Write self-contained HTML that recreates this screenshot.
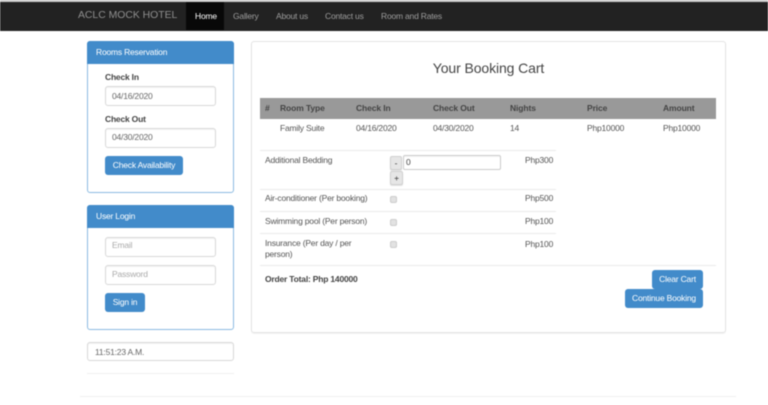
<!DOCTYPE html>
<html><head><meta charset="utf-8"><style>
html,body{margin:0;padding:0;background:#fff}
#r{position:relative;width:768px;height:405px;overflow:hidden;background:#fff;font-family:"Liberation Sans",sans-serif;font-size:8.5px;letter-spacing:-.2px;color:#555;filter:blur(.45px)}
#r div{position:absolute;box-sizing:border-box;white-space:nowrap}
.t{line-height:12px}
.b{font-weight:bold;color:#444;font-size:8.5px;letter-spacing:-.2px}
.h{font-weight:bold;color:#444;font-size:8.5px;letter-spacing:-.1px}
.in{background:#fff;border:1px solid #d8d8d8;border-radius:3px;padding-left:6px;line-height:18px;color:#666;box-shadow:inset 0 1px 1px rgba(0,0,0,.05)}
.ph{color:#aaa}
.btn{background:#428bca;border-radius:3px;color:#fff;text-align:center;line-height:18px}
.l{height:1px;background:#ebebeb}
.cb{width:7px;height:7px;background:#e2e2e2;border:1px solid #ccc;border-radius:2px;left:390px}
.sb{background:#e6e6e6;border:1px solid #d0d0d0;border-radius:2px;text-align:center;color:#333;box-shadow:0 1px 1px rgba(0,0,0,.12)}
</style></head><body><div id="r">
<div style="left:0;top:0;width:768px;height:31px;background:#222;border-top:2px solid #ccc"></div>
<div style="left:186px;top:2px;width:38px;height:28px;background:#080808"></div>
<div class="t" style="left:78px;top:10px;font-size:10.4px;letter-spacing:0;color:#8f8f8f">ACLC MOCK HOTEL</div>
<div class="t" style="left:195px;top:10px;color:#fff">Home</div>
<div class="t" style="left:233px;top:10px;color:#9d9d9d">Gallery</div>
<div class="t" style="left:276px;top:10px;color:#9d9d9d">About us</div>
<div class="t" style="left:325px;top:10px;color:#9d9d9d">Contact us</div>
<div class="t" style="left:381px;top:10px;color:#9d9d9d">Room and Rates</div>

<div style="left:87px;top:41px;width:147px;height:152px;border:1px solid #8dbbe2;border-radius:3px"></div>
<div style="left:87px;top:41px;width:147px;height:23px;background:#428bca;border-radius:3px 3px 0 0"></div>
<div class="t" style="left:96px;top:46px;color:#fff">Rooms Reservation</div>
<div class="t b" style="left:105px;top:71px">Check In</div>
<div class="in" style="left:105px;top:86px;width:111px;height:20px">04/16/2020</div>
<div class="t b" style="left:105px;top:113px">Check Out</div>
<div class="in" style="left:105px;top:128px;width:111px;height:20px;line-height:17px">04/30/2020</div>
<div class="btn" style="left:105px;top:156px;width:78px;height:19px">Check Availability</div>

<div style="left:87px;top:205px;width:147px;height:125px;border:1px solid #8dbbe2;border-radius:3px"></div>
<div style="left:87px;top:205px;width:147px;height:23px;background:#428bca;border-radius:3px 3px 0 0"></div>
<div class="t" style="left:96px;top:210px;color:#fff">User Login</div>
<div class="in ph" style="left:105px;top:237px;width:111px;height:20px;line-height:15px">Email</div>
<div class="in ph" style="left:105px;top:265px;width:111px;height:20px;line-height:16px">Password</div>
<div class="btn" style="left:105px;top:293px;width:40px;height:19px">Sign in</div>

<div class="in" style="left:87px;top:342px;width:147px;height:19px;padding-left:7px">11:51:23 A.M.</div>
<div class="l" style="left:87px;top:373px;width:147px;background:#f0f0f0"></div>
<div class="l" style="left:80px;top:396px;width:656px;background:#f0f0f0"></div>

<div style="left:251px;top:41px;width:475px;height:292px;border:1px solid #e3e3e3;border-radius:3px;box-shadow:0 1px 1px rgba(0,0,0,.05)"></div>
<div style="left:251px;top:59px;width:475px;text-align:center;font-size:14px;letter-spacing:-.1px;line-height:18px;color:#444">Your Booking Cart</div>

<div style="left:260px;top:98px;width:456px;height:21px;background:#999"></div>
<div class="t h" style="left:265px;top:102px">#</div>
<div class="t h" style="left:280px;top:102px">Room Type</div>
<div class="t h" style="left:356px;top:102px">Check In</div>
<div class="t h" style="left:433px;top:102px">Check Out</div>
<div class="t h" style="left:510px;top:102px">Nights</div>
<div class="t h" style="left:587px;top:102px">Price</div>
<div class="t h" style="left:663px;top:102px">Amount</div>
<div class="t" style="left:280px;top:122px">Family Suite</div>
<div class="t" style="left:356px;top:122px">04/16/2020</div>
<div class="t" style="left:433px;top:122px">04/30/2020</div>
<div class="t" style="left:510px;top:122px">14</div>
<div class="t" style="left:587px;top:122px">Php10000</div>
<div class="t" style="left:663px;top:122px">Php10000</div>

<div class="l" style="left:260px;top:150px;width:296px"></div>
<div class="t" style="left:265px;top:154px">Additional Bedding</div>
<div class="sb" style="left:390px;top:156px;width:12px;height:14px;line-height:12px">-</div>
<div class="in" style="left:403px;top:155px;width:98px;height:15px;padding-left:2px;line-height:13px;border-radius:2px;border-color:#ccc;color:#444">0</div>
<div class="sb" style="left:390px;top:171px;width:13px;height:14px;line-height:12px">+</div>
<div class="t" style="left:525px;top:154px">Php300</div>

<div class="l" style="left:260px;top:189px;width:296px"></div>
<div class="t" style="left:265px;top:192px">Air-conditioner (Per booking)</div>
<div class="cb" style="top:196px"></div>
<div class="t" style="left:525px;top:192px">Php500</div>

<div class="l" style="left:260px;top:211px;width:296px"></div>
<div class="t" style="left:265px;top:215px">Swimming pool (Per person)</div>
<div class="cb" style="top:219px"></div>
<div class="t" style="left:525px;top:215px">Php100</div>

<div class="l" style="left:260px;top:233px;width:296px"></div>
<div class="t" style="left:265px;top:238px;line-height:11px">Insurance (Per day / per<br>person)</div>
<div class="cb" style="top:241px"></div>
<div class="t" style="left:525px;top:238px">Php100</div>

<div class="l" style="left:260px;top:265px;width:456px"></div>
<div class="t b" style="left:265px;top:273px">Order Total: Php 140000</div>
<div class="btn" style="left:652px;top:270px;width:51px;height:19px">Clear Cart</div>
<div class="btn" style="left:625px;top:289px;width:78px;height:19px">Continue Booking</div>
</div></body></html>
